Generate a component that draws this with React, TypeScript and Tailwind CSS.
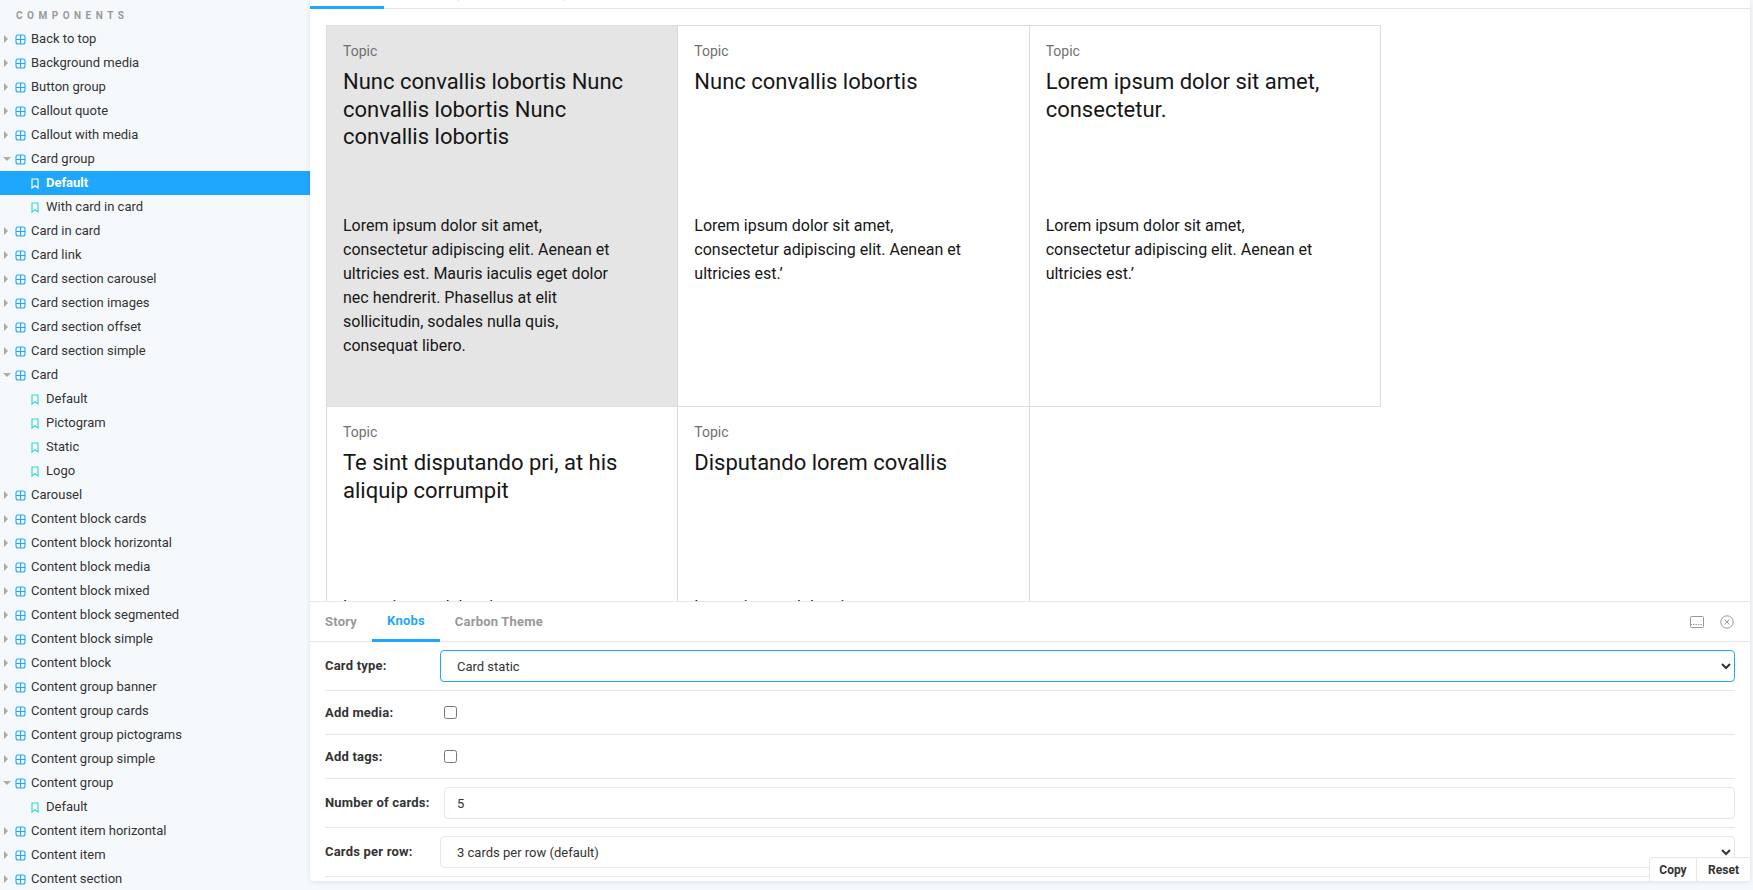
// Storybook shell showing the Card group story with its knobs panel.

const FONT = "font-['Roboto',sans-serif]";

type NavItem = { label: string; kind: "closed" | "open" | "story"; active?: boolean };

const closed = (label: string): NavItem => ({ label, kind: "closed" });
const open = (label: string): NavItem => ({ label, kind: "open" });
const story = (label: string, active?: boolean): NavItem => ({ label, kind: "story", active });

const NAV: NavItem[] = [
  closed("Back to top"),
  closed("Background media"),
  closed("Button group"),
  closed("Callout quote"),
  closed("Callout with media"),
  open("Card group"),
  story("Default", true),
  story("With card in card"),
  closed("Card in card"),
  closed("Card link"),
  closed("Card section carousel"),
  closed("Card section images"),
  closed("Card section offset"),
  closed("Card section simple"),
  open("Card"),
  story("Default"),
  story("Pictogram"),
  story("Static"),
  story("Logo"),
  closed("Carousel"),
  closed("Content block cards"),
  closed("Content block horizontal"),
  closed("Content block media"),
  closed("Content block mixed"),
  closed("Content block segmented"),
  closed("Content block simple"),
  closed("Content block"),
  closed("Content group banner"),
  closed("Content group cards"),
  closed("Content group pictograms"),
  closed("Content group simple"),
  open("Content group"),
  story("Default"),
  closed("Content item horizontal"),
  closed("Content item"),
  closed("Content section"),
];

type CardData = { heading: string[]; body: string[]; hover?: boolean };

const SHORT_BODY = [
  "Lorem ipsum dolor sit amet,",
  "consectetur adipiscing elit. Aenean et",
  "ultricies est.’",
];

const CARDS: CardData[] = [
  {
    heading: ["Nunc convallis lobortis Nunc", "convallis lobortis Nunc", "convallis lobortis"],
    body: [
      "Lorem ipsum dolor sit amet,",
      "consectetur adipiscing elit. Aenean et",
      "ultricies est. Mauris iaculis eget dolor",
      "nec hendrerit. Phasellus at elit",
      "sollicitudin, sodales nulla quis,",
      "consequat libero.",
    ],
    hover: true,
  },
  { heading: ["Nunc convallis lobortis"], body: SHORT_BODY },
  { heading: ["Lorem ipsum dolor sit amet,", "consectetur."], body: SHORT_BODY },
  { heading: ["Te sint disputando pri, at his", "aliquip corrumpit"], body: SHORT_BODY },
  { heading: ["Disputando lorem covallis"], body: SHORT_BODY },
];

function ComponentIcon() {
  return (
    <svg width="11" height="11" viewBox="0 0 11 11" fill="none" stroke="#1ea7fd" strokeWidth="1.1" className="shrink-0">
      <rect x="1" y="1" width="9" height="9" rx="2" />
      <path d="M5.5 1v9M1 5.5h9" />
    </svg>
  );
}

function BookmarkIcon({ color }: { color: string }) {
  return (
    <svg width="8" height="11" viewBox="0 0 8 11" fill="none" stroke={color} strokeWidth="1.2" className="shrink-0">
      <path d="M1 1h6v9L4 7.8 1 10z" />
    </svg>
  );
}

function NavRow({ item }: { item: NavItem }) {
  if (item.kind === "story") {
    return (
      <div
        className={`flex h-6 items-center pl-[31px] gap-[7px] ${
          item.active ? "bg-[#1ea7fd] text-white font-bold" : "text-[#333]"
        }`}
      >
        <BookmarkIcon color={item.active ? "#ffffff" : "#37d5d3"} />
        <span>{item.label}</span>
      </div>
    );
  }
  return (
    <div className="flex h-6 items-center text-[#333]">
      <span className="flex w-[15px] shrink-0 justify-start pl-[4px]">
        {item.kind === "closed" ? (
          <span className="h-0 w-0 border-y-[4px] border-l-[4px] border-y-transparent border-l-[#aaa]" />
        ) : (
          <span className="-ml-[1px] h-0 w-0 border-x-[4px] border-t-[4px] border-x-transparent border-t-[#aaa]" />
        )}
      </span>
      <ComponentIcon />
      <span className="ml-[5px]">{item.label}</span>
    </div>
  );
}

function Card({ card }: { card: CardData }) {
  return (
    <div
      className={`h-[381px] border-r border-b border-[#dcdcdc] pl-4 pt-4 ${card.hover ? "bg-[#e5e5e5]" : "bg-white"}`}
    >
      <p className="text-[14px] leading-[18px] text-[#6f6f6f]">Topic</p>
      <h3 className="mt-2 h-[146px] text-[22px] leading-[27.5px] text-[#161616]">
        {card.heading.map((line) => (
          <span key={line} className="block">
            {line}
          </span>
        ))}
      </h3>
      <p className="text-[16px] leading-6 text-[#161616]">
        {card.body.map((line) => (
          <span key={line} className="block">
            {line}
          </span>
        ))}
      </p>
    </div>
  );
}

function KnobRow({ label, children, className }: { label: string; children: React.ReactNode; className: string }) {
  return (
    <div className={`flex items-center border-b border-[#e6e6e6] ${className}`}>
      <label className="w-[115px] shrink-0 text-[13px] font-bold tracking-[0.2px] text-[#333]">{label}</label>
      {children}
    </div>
  );
}

function KnobSelect({ value, focused }: { value: string; focused?: boolean }) {
  return (
    <select
      defaultValue={value}
      className={`h-8 flex-1 rounded-[4px] border bg-white pl-[12px] text-[13px] text-[#333] ${
        focused ? "border-[#1ea7fd]" : "border-[#e6e6e6]"
      }`}
    >
      <option>{value}</option>
    </select>
  );
}

function BottomPanel() {
  return (
    <div className="relative flex h-[280px] shrink-0 flex-col border-t border-[#e6e6e6] bg-white">
      <div className="flex h-10 shrink-0 items-stretch border-b border-[#e6e6e6] text-[13px] font-bold tracking-[0.2px]">
        <span className="flex items-center px-[15px] text-[#999]">Story</span>
        <span className="-mb-px flex items-center border-b-[3px] border-[#1ea7fd] px-[15px] text-[#1ea7fd]">Knobs</span>
        <span className="flex items-center px-[15px] text-[#999]">Carbon Theme</span>
        <span className="ml-auto flex items-center gap-[16px] pr-[16px]">
          <svg width="14" height="12" viewBox="0 0 14 12" fill="none" stroke="#999" strokeWidth="1">
            <rect x="0.5" y="0.5" width="13" height="11" rx="1" />
            <path d="M0.5 8.5h13" strokeDasharray="1.5 1" />
          </svg>
          <svg width="14" height="14" viewBox="0 0 14 14" fill="none" stroke="#999" strokeWidth="1">
            <circle cx="7" cy="7" r="6.2" />
            <path d="M4.6 4.6l4.8 4.8M9.4 4.6l-4.8 4.8" />
          </svg>
        </span>
      </div>
      <div className="mx-[15px] flex flex-col">
        <KnobRow label="Card type:" className="h-[49px]">
          <KnobSelect value="Card static" focused />
        </KnobRow>
        <KnobRow label="Add media:" className="h-11">
          <input type="checkbox" className="ml-1" />
        </KnobRow>
        <KnobRow label="Add tags:" className="h-11">
          <input type="checkbox" className="ml-1" />
        </KnobRow>
        <KnobRow label="Number of cards:" className="h-[49px]">
          <input
            defaultValue="5"
            className="ml-1 h-8 flex-1 rounded-[4px] border border-[#e6e6e6] bg-white pl-[12px] text-[13px] text-[#333]"
          />
        </KnobRow>
        <KnobRow label="Cards per row:" className="h-[49px]">
          <KnobSelect value="3 cards per row (default)" />
        </KnobRow>
      </div>
      <div className="absolute bottom-0 right-0 flex h-6 rounded-tl-[4px] border-t border-l border-[#e6e6e6] bg-white text-[12px] font-bold text-[#333]">
        <span className="flex w-[47px] items-center justify-center border-r border-[#e6e6e6]">Copy</span>
        <span className="flex w-[53px] items-center justify-center">Reset</span>
      </div>
    </div>
  );
}

export default function App() {
  return (
    <div className={`flex h-[890px] overflow-hidden bg-[#f6f9fc] text-[13px] ${FONT}`}>
      <aside className="w-[310px] shrink-0 overflow-hidden pt-[9px]">
        <p className="mb-[3px] h-[15px] pl-4 text-[10px] font-bold leading-[13px] tracking-[0.45em] text-[#999]">
          COMPONENTS
        </p>
        {NAV.map((item, i) => (
          <NavRow key={i} item={item} />
        ))}
      </aside>
      <main className="mb-[9px] mr-[3px] flex min-w-0 flex-1 flex-col overflow-hidden rounded-b-[4px] bg-white shadow-[0_1px_5px_rgba(0,0,0,0.1)]">
        <div className="flex h-[9px] shrink-0 items-start border-b border-[#e6e6e6]">
          <span className="h-[9px] w-[74px] border-b-[3px] border-[#1ea7fd]" />
          <span className="ml-[74px] h-px w-px bg-[#ddd]" />
          <span className="ml-[105px] h-px w-px bg-[#ddd]" />
        </div>
        <div className="min-h-0 flex-1 overflow-hidden pl-4 pt-4">
          <div className="grid w-[1055px] grid-cols-3 border-t border-l border-[#dcdcdc]">
            {CARDS.map((card, i) => (
              <Card key={i} card={card} />
            ))}
          </div>
        </div>
        <BottomPanel />
      </main>
    </div>
  );
}
